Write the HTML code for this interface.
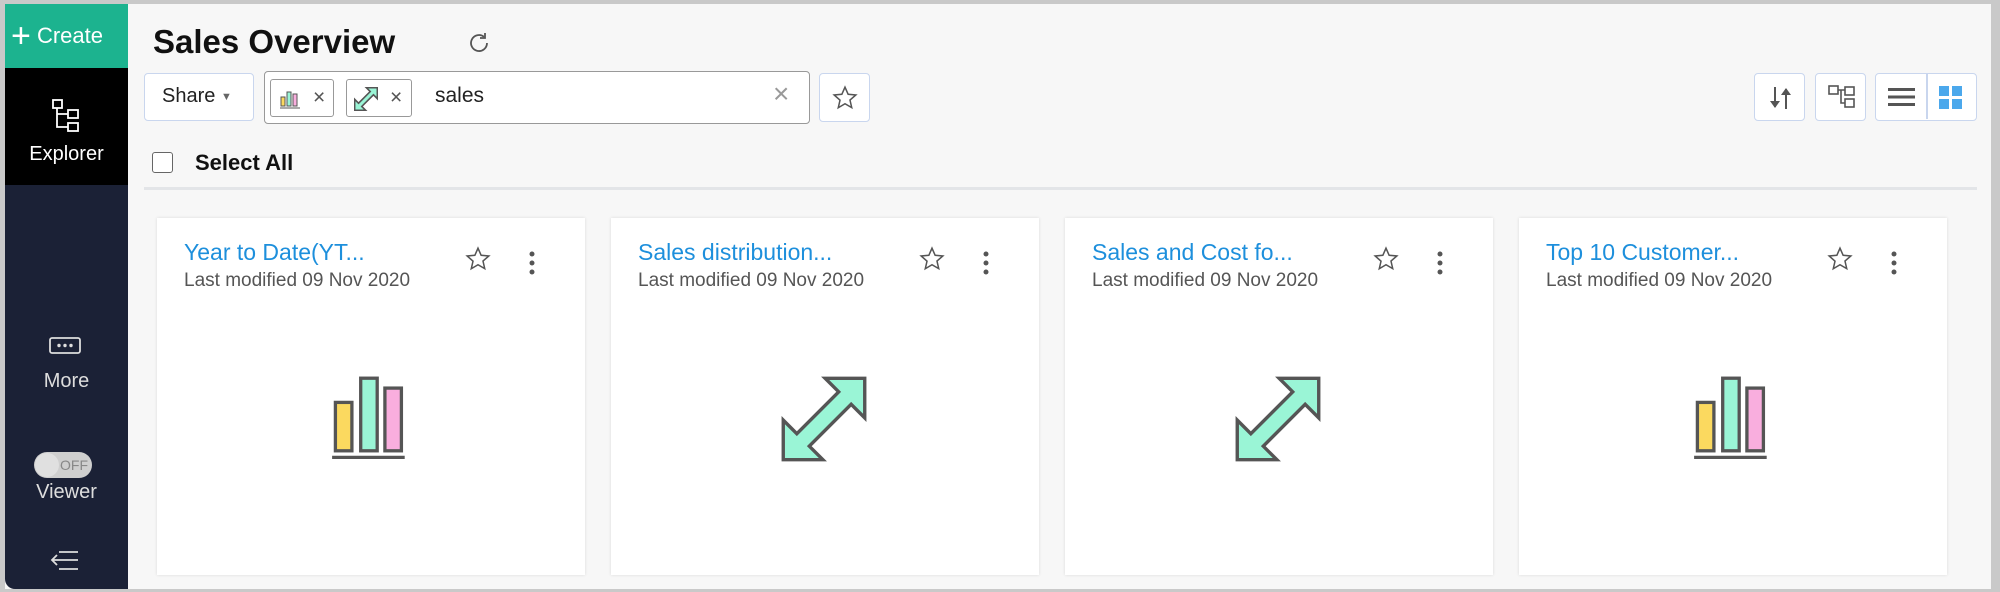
<!DOCTYPE html>
<html><head><meta charset="utf-8"><style>
*{box-sizing:border-box;margin:0;padding:0}
body{width:2000px;height:592px;background:#c9c9c9;font-family:"Liberation Sans",sans-serif;position:relative;overflow:hidden}
.abs{position:absolute}
#main{left:5px;top:4px;width:1986px;height:585px;background:#f7f7f7}
#side{left:5px;top:4px;width:123px;height:585px;background:#1b2136;border-bottom-left-radius:10px}
.card{position:absolute;top:218px;width:428px;height:357px;background:#fff;box-shadow:0 0 3px rgba(0,0,0,.12)}
.card .t{position:absolute;left:27px;top:21px;font-size:23px;color:#1d8fdc}
.card .s{position:absolute;left:27px;top:52px;font-size:19px;color:#555}
.card .st{position:absolute;left:308px;top:28px}
.card .k{position:absolute;left:372px;top:33px}
.card .ic{position:absolute;left:174px;top:158px}
.btn{position:absolute;background:#fff;border:1.5px solid #c9d6ee;border-radius:4px}
</style></head><body>
<div id="main" class="abs"></div>
<div id="side" class="abs">
 <div class="abs" style="left:0;top:0;width:123px;height:64px;background:#1cb38f;color:#fff;font-size:22px;line-height:64px;padding-left:6px"><span style="font-size:34px;vertical-align:-4px">+</span> Create</div>
 <div class="abs" style="left:0;top:64px;width:123px;height:117px;background:#000;color:#fff;font-size:20px;text-align:center">
  <svg class="abs" style="left:46px;top:30px" width="30" height="36" viewBox="0 0 30 36" fill="none" stroke="#fff" stroke-width="1.8"><rect x="2" y="2" width="9" height="8"/><rect x="17" y="12" width="10" height="8"/><rect x="17" y="25" width="10" height="8"/><path d="M6 10v19h11M6 16h11"/></svg>
  <div class="abs" style="left:0;width:123px;top:75px">Explorer</div>
 </div>
 <svg class="abs" style="left:44px;top:333px" width="32" height="18" viewBox="0 0 32 18"><rect x="1" y="1" width="30" height="15" rx="2" fill="none" stroke="#ddd" stroke-width="1.8"/><circle cx="10" cy="8.5" r="1.7" fill="#ddd"/><circle cx="16" cy="8.5" r="1.7" fill="#ddd"/><circle cx="22" cy="8.5" r="1.7" fill="#ddd"/></svg>
 <div class="abs" style="left:0;width:123px;top:366px;text-align:center;color:#ddd;font-size:20px">More</div>
 <div class="abs" style="left:29px;top:448px;width:58px;height:26px;border-radius:13px;background:#cfcfcf"><div class="abs" style="left:1px;top:1px;width:24px;height:24px;border-radius:12px;background:#e0e0e0"></div><span class="abs" style="left:26px;top:5px;font-size:14px;color:#888">OFF</span></div>
 <div class="abs" style="left:0;width:123px;top:477px;text-align:center;color:#ddd;font-size:20px">Viewer</div>
 <svg class="abs" style="left:45px;top:546px" width="30" height="22" viewBox="0 0 30 22" fill="none" stroke="#ddd" stroke-width="1.8"><path d="M9 2h19M2 10h26M9 19h19M7 5l-5 5 5 5"/></svg>
</div>
<div class="abs" style="left:153px;top:23px;font-size:33px;font-weight:bold;color:#111">Sales Overview</div>
<svg class="abs" style="left:467px;top:31px" width="24" height="24" viewBox="0 0 24 24" fill="none" stroke="#555" stroke-width="1.8"><path d="M20 12a8 8 0 1 1-3-6.2"/><path d="M18 2v5h-5"/></svg>
<div class="btn" style="left:144px;top:73px;width:110px;height:48px;font-size:20px;line-height:45px;padding-left:17px;color:#222">Share <span style="font-size:11px;color:#666;vertical-align:2px">▼</span></div>
<div class="abs" style="left:264px;top:71px;width:546px;height:53px;background:#fff;border:1.5px solid #999;border-radius:4px">
 <div class="abs" style="left:5px;top:7px;width:64px;height:38px;border:1.5px solid #999;border-radius:3px">
  <svg class="abs" style="left:8px;top:9px" width="22" height="20" viewBox="0 0 22 20"><rect x="2" y="8" width="4" height="9" fill="#fbd95f" stroke="#555"/><rect x="8" y="3" width="4" height="14" fill="#9af5d6" stroke="#555"/><rect x="14" y="5" width="4" height="12" fill="#f9aede" stroke="#555"/><path d="M1 19h20" stroke="#555"/></svg>
  <span class="abs" style="left:42px;top:6px;font-size:21px;color:#555">×</span></div>
 <div class="abs" style="left:81px;top:7px;width:66px;height:38px;border:1.5px solid #999;border-radius:3px">
  <svg class="abs" style="left:7px;top:7px" width="24" height="24" viewBox="0 0 74 74"><polygon points="72,2 72,36 60,24 24,60 36,72 2,72 2,38 14,50 50,14 38,2" fill="#9af5d6" stroke="#555" stroke-width="5"/></svg>
  <span class="abs" style="left:43px;top:6px;font-size:21px;color:#555">×</span></div>
 <span class="abs" style="left:170px;top:12px;font-size:21px;color:#222">sales</span>
 <span class="abs" style="left:508px;top:6px;font-size:28px;color:#999;font-weight:300">×</span>
</div>
<div class="btn" style="left:819px;top:73px;width:51px;height:49px"><svg class="abs" style="left:12px;top:11px" width="26" height="26" viewBox="0 0 24 24" fill="none" stroke="#555" stroke-width="1.4"><path d="M12 2l2.9 6.6 7.1.6-5.4 4.7 1.6 7L12 17.3 5.8 21l1.6-7L2 9.2l7.1-.6z"/></svg></div>
<div class="btn" style="left:1754px;top:73px;width:51px;height:48px"><svg class="abs" style="left:12px;top:11px" width="26" height="26" viewBox="0 0 26 26" fill="#555" stroke="#555" stroke-width="2"><path d="M8 2v20M19 24V4" fill="none"/><path d="M3 16l5 7 5-7z M14 10l5-7 5 7z" stroke="none"/></svg></div>
<div class="btn" style="left:1815px;top:73px;width:51px;height:48px"><svg class="abs" style="left:12px;top:10px" width="28" height="26" viewBox="0 0 28 26" fill="none" stroke="#555" stroke-width="1.6"><rect x="1" y="2" width="9" height="8"/><rect x="17" y="3" width="9" height="8"/><rect x="17" y="15" width="9" height="8"/><path d="M10 6h7M13 6v13h4"/></svg></div>
<div class="btn" style="left:1875px;top:73px;width:102px;height:48px">
 <div class="abs" style="left:50px;top:0;width:1.5px;height:45px;background:#c9d6ee"></div>
 <svg class="abs" style="left:12px;top:13px" width="28" height="20" viewBox="0 0 28 20" fill="#555"><rect x="0" y="1" width="27" height="3"/><rect x="0" y="8.5" width="27" height="3"/><rect x="0" y="16" width="27" height="3"/></svg>
 <svg class="abs" style="left:63px;top:12px" width="24" height="24" viewBox="0 0 24 24" fill="#4ba8ec"><rect x="0" y="0" width="10" height="10"/><rect x="13" y="0" width="10" height="10"/><rect x="0" y="13" width="10" height="10"/><rect x="13" y="13" width="10" height="10"/></svg>
</div>
<div class="abs" style="left:152px;top:152px;width:21px;height:21px;border:1.5px solid #666;border-radius:3px;background:#fff"></div>
<div class="abs" style="left:195px;top:150px;font-size:22px;font-weight:bold;color:#111">Select All</div>
<div class="abs" style="left:144px;top:187px;width:1833px;height:3px;background:#e3e5e8"></div>
<div class="card" style="left:157px"><div class="t">Year to Date(YT...</div><div class="s">Last modified 09 Nov 2020</div>
 <svg class="st" width="26" height="26" viewBox="0 0 24 24" fill="none" stroke="#555" stroke-width="1.4"><path d="M12 2l2.9 6.6 7.1.6-5.4 4.7 1.6 7L12 17.3 5.8 21l1.6-7L2 9.2l7.1-.6z"/></svg>
 <svg class="k" width="6" height="24"><circle cx="3" cy="3" r="2.5" fill="#555"/><circle cx="3" cy="12" r="2.5" fill="#555"/><circle cx="3" cy="21" r="2.5" fill="#555"/></svg>
 <svg class="ic" width="88" height="88" viewBox="0 0 80 80"><rect x="4" y="24" width="15" height="44" fill="#fbd95f" stroke="#555" stroke-width="3"/><rect x="27" y="2" width="15" height="66" fill="#9af5d6" stroke="#555" stroke-width="3"/><rect x="49" y="11" width="15" height="57" fill="#f9aede" stroke="#555" stroke-width="3"/><path d="M1 74h66" stroke="#555" stroke-width="3"/></svg></div>
<div class="card" style="left:611px"><div class="t">Sales distribution...</div><div class="s">Last modified 09 Nov 2020</div>
 <svg class="st" width="26" height="26" viewBox="0 0 24 24" fill="none" stroke="#555" stroke-width="1.4"><path d="M12 2l2.9 6.6 7.1.6-5.4 4.7 1.6 7L12 17.3 5.8 21l1.6-7L2 9.2l7.1-.6z"/></svg>
 <svg class="k" width="6" height="24"><circle cx="3" cy="3" r="2.5" fill="#555"/><circle cx="3" cy="12" r="2.5" fill="#555"/><circle cx="3" cy="21" r="2.5" fill="#555"/></svg>
 <svg class="abs" style="left:170px;top:158px" width="86" height="86" viewBox="0 0 76 76"><polygon points="74,2 74,37 62,25 25,62 37,74 2,74 2,39 14,51 51,14 39,2" fill="#9af5d6" stroke="#555" stroke-width="3"/></svg></div>
<div class="card" style="left:1065px"><div class="t">Sales and Cost fo...</div><div class="s">Last modified 09 Nov 2020</div>
 <svg class="st" width="26" height="26" viewBox="0 0 24 24" fill="none" stroke="#555" stroke-width="1.4"><path d="M12 2l2.9 6.6 7.1.6-5.4 4.7 1.6 7L12 17.3 5.8 21l1.6-7L2 9.2l7.1-.6z"/></svg>
 <svg class="k" width="6" height="24"><circle cx="3" cy="3" r="2.5" fill="#555"/><circle cx="3" cy="12" r="2.5" fill="#555"/><circle cx="3" cy="21" r="2.5" fill="#555"/></svg>
 <svg class="abs" style="left:170px;top:158px" width="86" height="86" viewBox="0 0 76 76"><polygon points="74,2 74,37 62,25 25,62 37,74 2,74 2,39 14,51 51,14 39,2" fill="#9af5d6" stroke="#555" stroke-width="3"/></svg></div>
<div class="card" style="left:1519px"><div class="t">Top 10 Customer...</div><div class="s">Last modified 09 Nov 2020</div>
 <svg class="st" width="26" height="26" viewBox="0 0 24 24" fill="none" stroke="#555" stroke-width="1.4"><path d="M12 2l2.9 6.6 7.1.6-5.4 4.7 1.6 7L12 17.3 5.8 21l1.6-7L2 9.2l7.1-.6z"/></svg>
 <svg class="k" width="6" height="24"><circle cx="3" cy="3" r="2.5" fill="#555"/><circle cx="3" cy="12" r="2.5" fill="#555"/><circle cx="3" cy="21" r="2.5" fill="#555"/></svg>
 <svg class="ic" width="88" height="88" viewBox="0 0 80 80"><rect x="4" y="24" width="15" height="44" fill="#fbd95f" stroke="#555" stroke-width="3"/><rect x="27" y="2" width="15" height="66" fill="#9af5d6" stroke="#555" stroke-width="3"/><rect x="49" y="11" width="15" height="57" fill="#f9aede" stroke="#555" stroke-width="3"/><path d="M1 74h66" stroke="#555" stroke-width="3"/></svg></div>
</body></html>
